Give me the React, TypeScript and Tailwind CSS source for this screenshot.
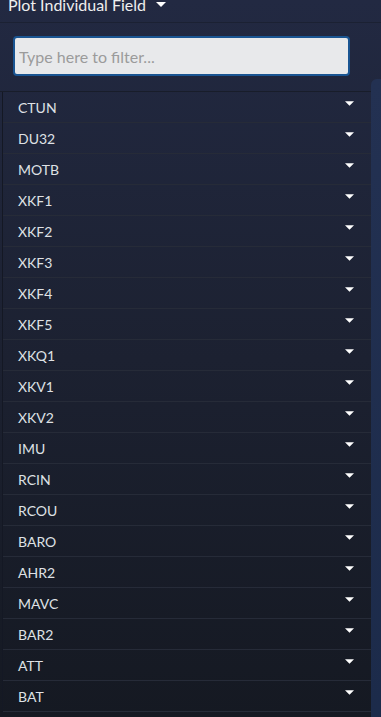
import React from 'react';

const fields = [
  'CTUN', 'DU32', 'MOTB', 'XKF1', 'XKF2', 'XKF3', 'XKF4', 'XKF5', 'XKQ1', 'XKV1',
  'XKV2', 'IMU', 'RCIN', 'RCOU', 'BARO', 'AHR2', 'MAVC', 'BAR2', 'ATT', 'BAT',
];

const Caret: React.FC<{ className?: string }> = ({ className }) => (
  <svg viewBox="0 0 10 5" className={className} fill="currentColor">
    <path d="M0 0 L10 0 L5 5 Z" />
  </svg>
);

const App: React.FC = () => {
  return (
    <div
      className="h-screen overflow-hidden bg-gradient-to-b from-[#222942] via-[#1c2131] to-[#151922] text-white"
      style={{ fontFamily: 'Lato, "Open Sans", sans-serif' }}
    >
      {/* Header */}
      <div className="-mt-[9px] h-[32px] flex items-center pb-[4px] px-2 border-b border-[#1b2133]">
        <span className="text-[16px] text-[#eeeeee]">Plot Individual Field</span>
        <Caret className="ml-[10px] w-[10px] h-[5px] text-white" />
      </div>

      {/* Filter */}
      <div className="pt-[13px] pb-[3px] pl-[13px]">
        <input
          type="text"
          placeholder="Type here to filter..."
          className="w-[337px] h-[40px] rounded-[4px] border-2 border-[#1a5592] bg-[#e8e9eb] px-[4px] text-[16px] text-[#333] placeholder:text-[#9b9b9b] outline-none"
        />
      </div>

      {/* List + side panel */}
      <div className="flex h-full">
        <div className="flex-1">
          <div className="h-[12px]" />
          <div className="border-t border-[#181d2a]">
            <div className="ml-[2px] border-l border-[#141824] h-full">
              {fields.map((name) => (
                <div
                  key={name}
                  className="h-[31px] flex items-center justify-between pl-[15px] pr-[17px] border-b border-[#262b38]"
                >
                  <span className="text-[14px] text-[#dfe1e5]">{name}</span>
                  <Caret className="self-start mt-[9px] w-[9px] h-[5px] text-white" />
                </div>
              ))}
              <div className="h-[31px]" />
            </div>
          </div>
        </div>
        <div className="w-[10px] rounded-tl-[6px] bg-gradient-to-b from-[#233152] to-[#1b2a49]" />
      </div>
    </div>
  );
};

export default App;
